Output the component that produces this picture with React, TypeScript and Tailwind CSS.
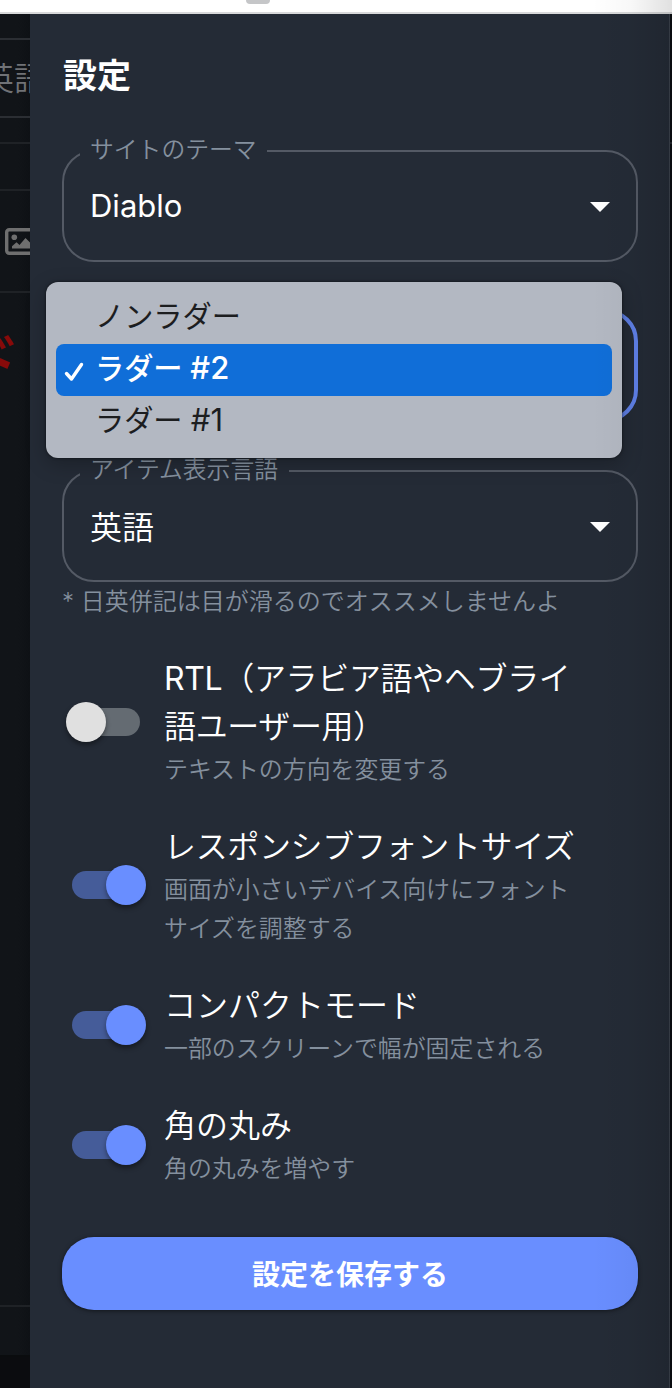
import { ReactNode } from "react";
import clsx from "clsx";

type Toggle = {
  title: ReactNode;
  note: ReactNode;
  on: boolean;
  tight?: boolean;
};

const toggles: Toggle[] = [
  {
    title: (
      <>
        <span className="font-normal">RTL</span>（アラビア語やヘブライ
        <br />
        語ユーザー用）
      </>
    ),
    note: "テキストの方向を変更する",
    on: false,
    tight: true,
  },
  {
    title: "レスポンシブフォントサイズ",
    note: (
      <>
        画面が小さいデバイス向けにフォント
        <br />
        サイズを調整する
      </>
    ),
    on: true,
    tight: true,
  },
  { title: "コンパクトモード", note: "一部のスクリーンで幅が固定される", on: true },
  { title: "角の丸み", note: "角の丸みを増やす", on: true },
];

const ladderOptions = [
  { name: "ノンラダー", number: "" },
  { name: "ラダー", number: "#2" },
  { name: "ラダー", number: "#1" },
];

export default function App() {
  return (
    <div className="relative flex h-[1388px] w-[672px] flex-col overflow-hidden bg-[#111418] font-['Inter','Noto_Sans_CJK_JP',sans-serif] font-[350] text-white">
      <div className="h-[14px] shrink-0 border-b-2 border-[#d8d9da] bg-white">
        <div className="ml-[246px] h-1 w-6 rounded-b-[4px] bg-[#c5c6c8]" />
      </div>
      <div className="flex flex-1">
        <Backdrop />
        <SettingsDrawer />
        <div className="flex-1 bg-[#0b0e12]">
          <div className="mt-[128px] h-0.5 bg-[#24282d]" />
        </div>
      </div>
      {/* shadow coming in from the right edge of the window */}
      <div className="pointer-events-none absolute inset-y-0 right-0 w-20 bg-linear-to-r from-transparent via-black/3 to-black/12" />
    </div>
  );
}

// The page behind the drawer, only its right end is visible
function Backdrop() {
  return (
    <div className="flex w-[30px] shrink-0 flex-col overflow-hidden bg-linear-to-r from-[#111418] from-60% to-[#0e1115]">
      <div className="mt-6 flex h-20 items-center border-y-2 border-[#2b2e33]">
        <span className="mt-0.5 -ml-[18px] text-[32px] whitespace-nowrap text-[#707276]">英語</span>
      </div>
      <div className="mt-6 h-[49px] border-y-2 border-[#1f2226]" />
      <div className="flex h-[102px] items-center border-b-2 border-[#1f2226] pl-[5px]">
        <svg className="h-[27px] w-9 shrink-0" viewBox="0 0 36 27" fill="none">
          <rect x="1.7" y="1.7" width="32" height="23.6" rx="2.5" stroke="#6f6f6f" strokeWidth="3.4" />
          <circle cx="9.3" cy="9.2" r="2.8" fill="#6f6f6f" />
          <path d="M7 20.5v-2.2l4.5-4 3 2.7 6-7 9 9v1.5z" fill="#6f6f6f" />
        </svg>
      </div>
      <div className="mt-[34px] flex h-[70px] items-center">
        <span className="-ml-[41px] text-[62px] leading-none font-medium text-[#870a0a]">ド</span>
      </div>
      <div className="mt-[908px] h-[52px] border-t-2 border-b-2 border-t-[#1f2226] border-b-[#0a0c0e]" />
      <div className="flex-1 bg-[#0b0c0f]" />
    </div>
  );
}

function SettingsDrawer() {
  return (
    <div className="w-[640px] shrink-0 border-r border-[#3b424c] bg-[#242b36] pr-[31px] pl-8">
      <h2 className="pt-[38px] pl-px text-[34px] leading-[48px] font-bold">設定</h2>
      <div className="mt-[50px] flex flex-col gap-12">
        <SelectField label="サイトのテーマ" value="Diablo" labelWidth="w-[187px]" />
        <div className="relative">
          <SelectField focused />
          <LadderMenu />
        </div>
        <SelectField label="アイテム表示言語" value="英語" labelWidth="w-[209px]" />
      </div>
      <p className="mt-px text-[24px] leading-[38px] whitespace-nowrap text-[#84909e]">
        * 日英併記は目が滑るのでオススメしませんよ
      </p>
      <div className="mt-[33px] flex flex-col gap-[33px]">
        {toggles.map((toggle, i) => (
          <ToggleRow key={i} {...toggle} />
        ))}
      </div>
      <button className="mt-[49px] h-[73px] w-full rounded-[32px] bg-[#698eff] text-[28px] font-bold shadow-[0_1px_4px_rgba(0,0,0,0.5)]">
        <span className="relative top-px">設定を保存する</span>
      </button>
    </div>
  );
}

type SelectFieldProps = {
  label?: string;
  value?: string;
  labelWidth?: string;
  focused?: boolean;
};

function SelectField({ label, value, labelWidth, focused }: SelectFieldProps) {
  return (
    <fieldset
      className={clsx(
        "-mt-[11px] h-[123px] rounded-[32px]",
        focused ? "border-4 border-[#6183ec] px-3.5" : "border-2 border-[#545a65] px-4"
      )}
    >
      <legend className={clsx("h-6 pl-2.5 text-[23.8px] leading-[22px] whitespace-nowrap text-[#84909e]", labelWidth)}>
        {label}
      </legend>
      {value && (
        <div className="flex h-[87px] items-center justify-between px-2.5">
          <span className={value === "Diablo" ? "text-[31px] font-normal" : "mt-0.5 text-[32px]"}>{value}</span>
          <svg className="h-2.5 w-5" viewBox="0 0 20 10" fill="currentColor">
            <path d="M0 0h20L10 10z" />
          </svg>
        </div>
      )}
    </fieldset>
  );
}

function LadderMenu() {
  return (
    <ul className="absolute -top-[28px] -left-4 h-[176px] w-[576px] rounded-xl bg-[#b3b8c2] p-2.5 font-normal text-[#1c1d1f] shadow-[0_0_3px_rgba(0,0,0,0.6),0_6px_20px_rgba(0,0,0,0.25)]">
      {ladderOptions.map(({ name, number }) => {
        const selected = number === "#2";
        return (
          <li
            key={name + number}
            className={clsx("flex h-[52px] items-center rounded-lg pl-2", selected && "bg-[#106ed8] font-medium text-white")}
          >
            <svg className="mt-1 mr-[11px] h-5 w-5" viewBox="0 0 20 20" fill="none">
              {selected && (
                <path d="M2.5 11.5L7.5 17L17.5 2.5" stroke="white" strokeWidth="3.4" strokeLinecap="round" strokeLinejoin="round" />
              )}
            </svg>
            <span className="-mt-1 text-[29.2px] leading-none">
              {name} <span className="text-[31px]">{number}</span>
            </span>
          </li>
        );
      })}
    </ul>
  );
}

function ToggleRow({ title, note, on, tight }: Toggle) {
  return (
    <div className="flex items-center">
      <div className={clsx("relative ml-2.5 h-7 w-[68px] shrink-0 rounded-full", on ? "bg-[#455c99]" : "bg-[#646b72]")}>
        <span
          className={clsx(
            "absolute -top-1.5 size-10 rounded-full shadow-[0_3px_5px_rgba(0,0,0,0.4)]",
            on ? "-right-1.5 bg-[#698eff]" : "-left-1.5 bg-[#e0e0e0]"
          )}
        />
      </div>
      <div className="ml-6 whitespace-nowrap">
        <div className={clsx("pt-px text-[32px] leading-[48px]", tight && "tracking-[-0.35px]")}>{title}</div>
        <div className="-mt-px text-[23.9px] leading-[39px] text-[#84909e]">{note}</div>
      </div>
    </div>
  );
}
